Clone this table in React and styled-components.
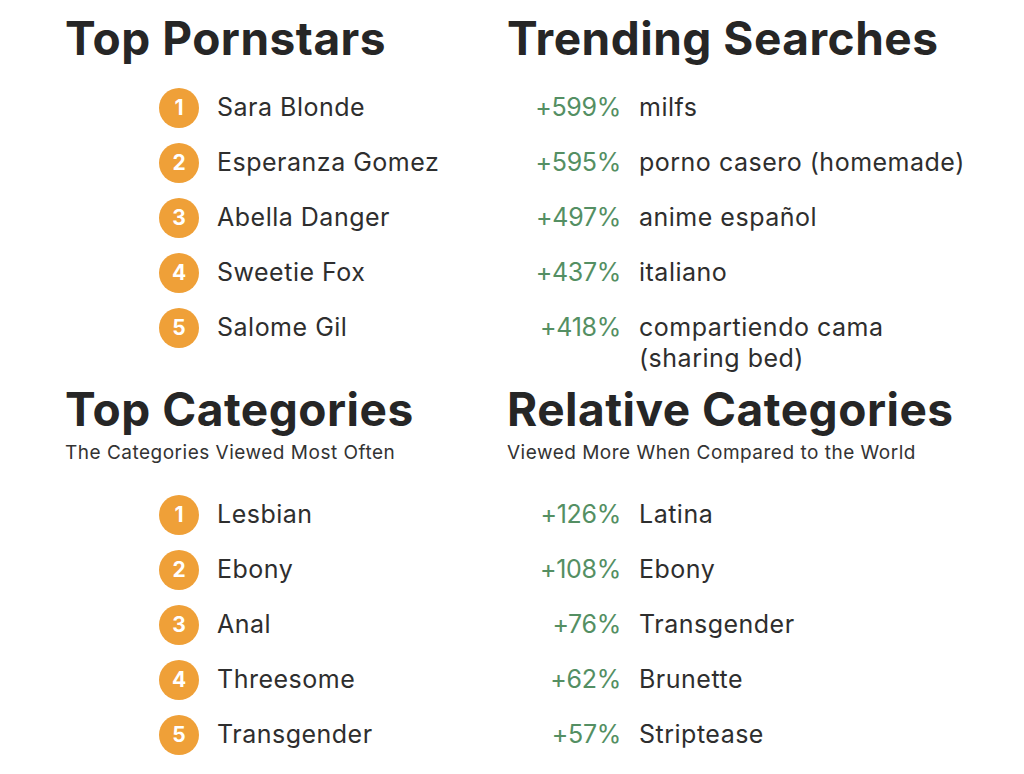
import React from "react";
import styled, { createGlobalStyle } from "styled-components";

const GlobalStyle = createGlobalStyle`
  body {
    margin: 0;
    background: #fff;
    font-family: Inter, "Open Sans", sans-serif;
    color: #2b2b2b;
  }
`;

const Page = styled.div`
  padding: 10px 0 0 65px;
`;

const Section = styled.section`
  display: grid;
  grid-template-columns: 442px 1fr;
  margin-top: ${(p) => p.$gap || 0}px;
`;

const Panel = styled.div`
  display: flex;
  flex-direction: column;
`;

const Heading = styled.h2`
  margin: 0;
  font-size: 46px;
  line-height: 56px;
  font-weight: 700;
  color: #262626;
  letter-spacing: 0.5px;
`;

const Subtitle = styled.p`
  margin: 5px 0 0;
  font-size: 19px;
  line-height: 22px;
  letter-spacing: 0.5px;
  color: #333;
`;

const List = styled.ol`
  list-style: none;
  margin: ${(p) => p.$top}px 0 0;
  padding: 0;
`;

const RankRow = styled.li`
  display: flex;
  align-items: center;
  height: 55px;
  padding-left: 94px;
`;

const Badge = styled.span`
  width: 40px;
  height: 40px;
  border-radius: 50%;
  background: #efa038;
  color: #fff;
  font-weight: 700;
  font-size: 21px;
  display: flex;
  align-items: center;
  justify-content: center;
  flex-shrink: 0;
`;

const Name = styled.span`
  margin-left: 18px;
  font-size: 25px;
  line-height: 31px;
  letter-spacing: 0.5px;
  color: #2e2e2e;
`;

const TrendRow = styled.li`
  display: flex;
  align-items: flex-start;
  min-height: 55px;
  box-sizing: border-box;
  padding-top: 12px;
`;

const Percent = styled.span`
  width: 114px;
  flex-shrink: 0;
  text-align: right;
  font-size: 25px;
  line-height: 31px;
  letter-spacing: -0.3px;
  color: #548f63;
`;

const Term = styled(Name)`
  margin-left: 18px;
  max-width: 330px;
`;

const topStars = ["Sara Blonde", "Esperanza Gomez", "Abella Danger", "Sweetie Fox", "Salome Gil"];
const trending = [
  ["+599%", "milfs"],
  ["+595%", "porno casero (homemade)"],
  ["+497%", "anime español"],
  ["+437%", "italiano"],
  ["+418%", "compartiendo cama (sharing bed)"],
];
const topCats = ["Lesbian", "Ebony", "Anal", "Threesome", "Transgender"];
const relCats = [
  ["+126%", "Latina"],
  ["+108%", "Ebony"],
  ["+76%", "Transgender"],
  ["+62%", "Brunette"],
  ["+57%", "Striptease"],
];

const RankList = ({ items, top }) => (
  <List $top={top}>
    {items.map((name, i) => (
      <RankRow key={name}>
        <Badge>{i + 1}</Badge>
        <Name>{name}</Name>
      </RankRow>
    ))}
  </List>
);

const TrendList = ({ items, top }) => (
  <List $top={top}>
    {items.map(([pct, term]) => (
      <TrendRow key={term}>
        <Percent>{pct}</Percent>
        <Term>{term}</Term>
      </TrendRow>
    ))}
  </List>
);

export default function App() {
  return (
    <Page>
      <GlobalStyle />
      <Section>
        <Panel>
          <Heading>Top Pornstars</Heading>
          <RankList items={topStars} top={14} />
        </Panel>
        <Panel>
          <Heading>Trending Searches</Heading>
          <TrendList items={trending} top={14} />
        </Panel>
      </Section>
      <Section $gap={7}>
        <Panel>
          <Heading>Top Categories</Heading>
          <Subtitle>The Categories Viewed Most Often</Subtitle>
          <RankList items={topCats} top={23} />
        </Panel>
        <Panel>
          <Heading>Relative Categories</Heading>
          <Subtitle>Viewed More When Compared to the World</Subtitle>
          <TrendList items={relCats} top={23} />
        </Panel>
      </Section>
    </Page>
  );
}
